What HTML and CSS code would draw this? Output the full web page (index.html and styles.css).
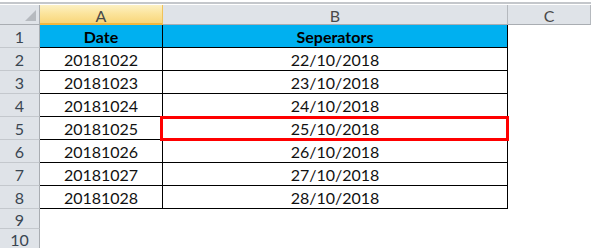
FILE: index.html
```html
<!DOCTYPE html>
<html>
<head>
<meta charset="utf-8">
<link rel="stylesheet" href="styles.css">
</head>
<body>
<div class="topbar"></div>
<div class="sheet">
  <div class="corner"><span class="tri"></span></div>
  <div class="colhdr sel">A</div>
  <div class="colhdr">B</div>
  <div class="colhdr last">C</div>

  <div class="rowhdr">1</div>
  <div class="cell head">Date</div>
  <div class="cell head b">Seperators</div>
  <div class="cell empty"></div>

  <div class="rowhdr">2</div>
  <div class="cell">20181022</div>
  <div class="cell b">22/10/2018</div>
  <div class="cell empty"></div>

  <div class="rowhdr">3</div>
  <div class="cell">20181023</div>
  <div class="cell b">23/10/2018</div>
  <div class="cell empty"></div>

  <div class="rowhdr">4</div>
  <div class="cell">20181024</div>
  <div class="cell b">24/10/2018</div>
  <div class="cell empty"></div>

  <div class="rowhdr">5</div>
  <div class="cell">20181025</div>
  <div class="cell b marked">25/10/2018<span class="redbox"></span></div>
  <div class="cell empty"></div>

  <div class="rowhdr">6</div>
  <div class="cell">20181026</div>
  <div class="cell b">26/10/2018</div>
  <div class="cell empty"></div>

  <div class="rowhdr">7</div>
  <div class="cell">20181027</div>
  <div class="cell b">27/10/2018</div>
  <div class="cell empty"></div>

  <div class="rowhdr">8</div>
  <div class="cell">20181028</div>
  <div class="cell b">28/10/2018</div>
  <div class="cell empty"></div>

  <div class="rowhdr short">9</div>
  <div class="cell blank short"></div>
  <div class="cell blank short"></div>
  <div class="cell blank short"></div>

  <div class="rowhdr short">10</div>
  <div class="cell blank short"></div>
  <div class="cell blank short"></div>
  <div class="cell blank short"></div>
</div>
</body>
</html>
```
FILE: styles.css
```css
html, body {
  margin: 0;
  padding: 0;
  background: #ffffff;
  overflow: hidden;
}
body {
  width: 591px;
  height: 248px;
  font-family: "Lato", "Open Sans", sans-serif;
}
.topbar {
  height: 5px;
  box-sizing: border-box;
  border-top: 1px solid #ffffff;
  background: linear-gradient(#ffffff 0, #ffffff 1px, #c4c7cb 1px, #c4c7cb 3px, #ffffff 3px);
}
.sheet {
  display: grid;
  grid-template-columns: 40px 123px 345px 83px;
  grid-template-rows: 20px repeat(8, 23px) 20px 20px;
}
.corner, .colhdr, .rowhdr {
  box-sizing: border-box;
  background: #dfe3e8;
  color: #4a4a4a;
  font-size: 16px;
  display: flex;
  align-items: center;
  justify-content: center;
}
.corner {
  position: relative;
  border-right: 1px solid #a9adb2;
  border-bottom: 1px solid #a9adb2;
}
.tri {
  position: absolute;
  right: 3px;
  bottom: 3px;
  width: 0;
  height: 0;
  border-left: 11px solid transparent;
  border-bottom: 11px solid #b6babf;
}
.colhdr {
  border-right: 1px solid #b5b9be;
  border-bottom: 1px solid #a9adb2;
  padding-top: 1px;
}
.colhdr.sel {
  background: linear-gradient(#fdf1c3 0%, #fbe39a 50%, #f8d67a 100%);
  border-right: 1px solid #f0c25a;
  border-bottom: 2px solid #f3b73f;
  padding-top: 2px;
}
.colhdr.last {
  border-right: 1px solid #b5b9be;
}
.rowhdr {
  border-right: 1px solid #a9adb2;
  border-bottom: 1px solid #c4c8cd;
  color: #3a4652;
  padding-top: 1px;
}
.cell {
  box-sizing: border-box;
  font-size: 16px;
  color: #111111;
  display: flex;
  align-items: center;
  justify-content: center;
  border-right: 1px solid #000000;
  border-bottom: 1px solid #000000;
  padding-top: 1px;
}
.cell.head {
  background: #00b0f0;
  font-weight: bold;
  color: #000000;
}
.cell.empty {
  border-right: none;
  border-bottom: none;
}
.cell.blank {
  border: none;
}
.marked {
  position: relative;
}
.redbox {
  position: absolute;
  top: -1px;
  left: -3px;
  right: -2px;
  bottom: -2px;
  border: 3px solid #ff0000;
  z-index: 2;
}
```
